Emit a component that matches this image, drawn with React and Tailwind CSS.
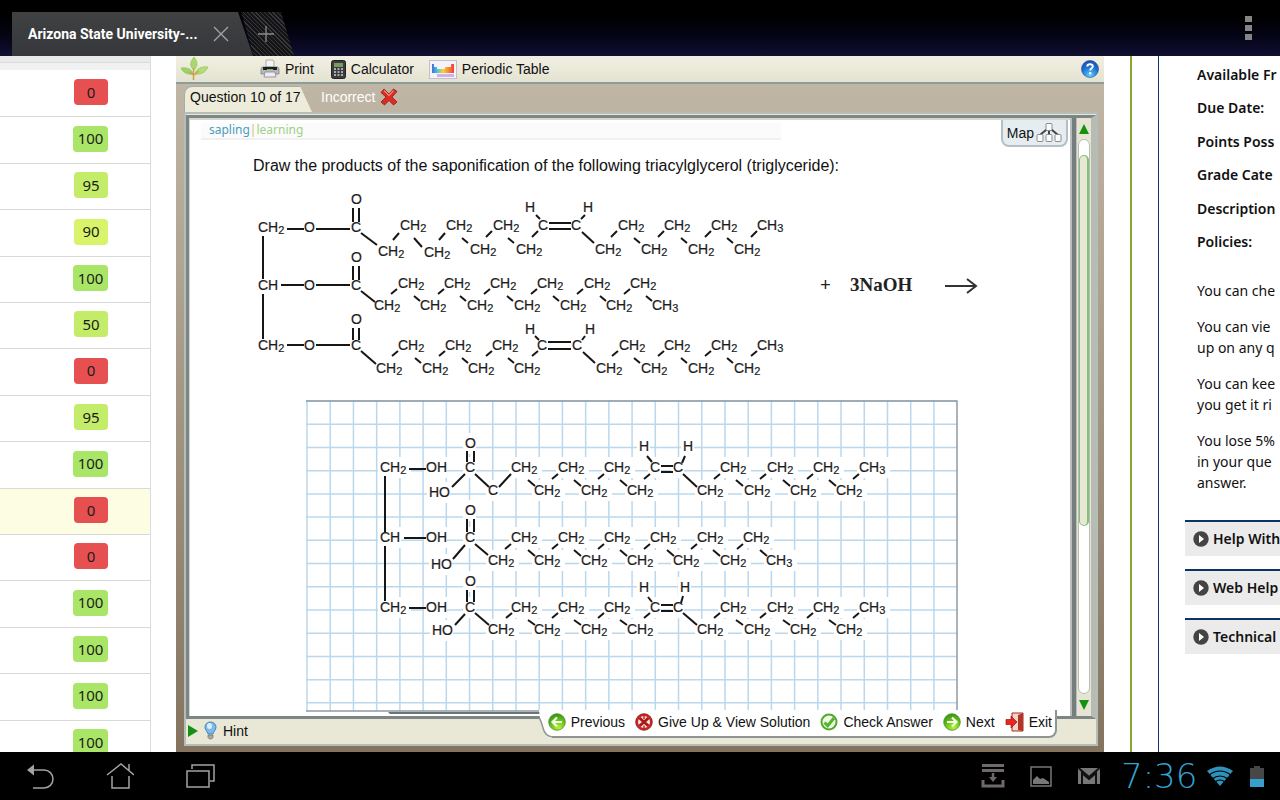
import React from 'react';

const SCORES = [0, 100, 95, 90, 100, 50, 0, 95, 100, 0, 0, 100, 100, 100, 100];

const ACTIVE_ROW = 9;

const scoreColor = (score) => {
  if (score === 0) return 'w-[34px] bg-[#e65050]';
  if (score === 50) return 'w-[34px] bg-[#c3ec69]';
  if (score === 90) return 'w-[34px] bg-[#d9f36b]';
  if (score === 95) return 'w-[34px] bg-[#c3ec69]';
  return 'w-[35px] bg-[#a9e567]';
};

const DETAILS = ['Available Fr', 'Due Date:', 'Points Poss', 'Grade Cate', 'Description', 'Policies:'];

const POLICIES = [
  ['You can che'],
  ['You can vie', 'up on any q'],
  ['You can kee', 'you get it ri'],
  ['You lose 5%', 'in your que', 'answer.'],
];

const HELP_LINKS = ['Help With', 'Web Help', 'Technical'];

// Molecule data: labels are [x, baseline, text], bonds are [x1, y1, x2, y2]
const up = (xs, y, dx = 6, dy = 6) => xs.map((x) => [x, y, x + dx, y - dy]);
const down = (xs, y, dx = 6, dy = 5) => xs.map((x) => [x, y, x + dx, y + dy]);
const row = (xs, y, last) => xs.map((x, i) => [x, y, last && i === xs.length - 1 ? 'CH3' : 'CH2']);

const REACTANT_LABELS = [
  [258, 232, 'CH2'], [304, 232, 'O'], [351, 232, 'C'], [351, 204, 'O'],
  ...row([400, 446, 493], 230), [538, 230, 'C'], [571, 230, 'C'],
  ...row([618, 664, 711, 757], 230, true),
  [378, 256, 'CH2'], [424, 257, 'CH2'],
  ...row([470, 516, 595, 641, 688, 734], 254),
  [525, 212, 'H'], [583, 212, 'H'],

  [258, 290, 'CH'], [304, 290, 'O'], [351, 290, 'C'], [351, 262, 'O'],
  ...row([398, 444, 490, 537, 584, 630], 288),
  ...row([374, 420, 467, 514, 560, 606, 652], 310, true),

  [258, 350, 'CH2'], [304, 350, 'O'], [351, 350, 'C'], [351, 324, 'O'],
  ...row([398, 445, 492], 350), [537, 350, 'C'], [572, 350, 'C'],
  ...row([619, 664, 711, 757], 350, true),
  ...row([376, 422, 468, 514, 596, 641, 688, 734], 373),
  [525, 334, 'H'], [585, 334, 'H'],
];

const REACTANT_BONDS = [
  [263, 236, 263, 279], [263, 294, 263, 339],
  [287, 229, 304, 229], [316, 229, 350, 229],
  [281, 285, 304, 285], [316, 285, 350, 285],
  [287, 345, 304, 345], [316, 345, 350, 345],
  [353, 208, 353, 222], [359, 208, 359, 222],
  [353, 266, 353, 280], [359, 266, 359, 280],
  [353, 328, 353, 340], [359, 328, 359, 340],
  [361, 233, 377, 245], [361, 291, 375, 302], [361, 351, 376, 364],
  [549, 223, 571, 223], [549, 229, 571, 229],
  [548, 342, 571, 342], [548, 349, 571, 349],
  [536, 215, 540, 219], [585, 215, 581, 219],
  [535, 336, 539, 340], [585, 336, 582, 340],
  [582, 232, 594, 243], [583, 352, 595, 363],
  [414, 238, 422, 247],
  ...up([393, 439], 240, 6, 7),
  ...up([486, 532, 611, 658, 705, 751], 237),
  ...down([462, 508, 634, 681, 727], 238),
  ...up([391, 438, 484, 531, 577, 624], 294, 6, 5),
  ...down([414, 460, 507, 553, 600, 646], 296),
  ...up([392, 439, 486, 532, 612, 658, 705, 751], 356, 6, 5),
  ...down([415, 462, 508, 634, 681, 727], 358),
];

const PRODUCT_LABELS = [
  [380, 472, 'CH2'], [426, 472, 'OH'], [465, 472, 'C'], [465, 448, 'O'], [429, 497, 'HO'], [488, 495, 'C'],
  ...row([511, 558, 604], 472), [650, 472, 'C'], [673, 472, 'C'],
  ...row([720, 767, 813, 859], 472, true),
  ...row([534, 581, 627, 697, 744, 790, 836], 495),
  [639, 451, 'H'], [683, 451, 'H'],

  [380, 542, 'CH'], [426, 542, 'OH'], [465, 542, 'C'], [465, 515, 'O'], [431, 569, 'HO'],
  ...row([511, 558, 604, 650, 697, 743], 542),
  ...row([488, 534, 581, 627, 673, 720, 766], 565, true),

  [380, 612, 'CH2'], [426, 612, 'OH'], [465, 612, 'C'], [465, 586, 'O'], [432, 635, 'HO'],
  ...row([511, 558, 604], 612), [650, 612, 'C'], [673, 612, 'C'],
  ...row([720, 767, 813, 859], 612, true),
  ...row([488, 534, 581, 627, 697, 744, 790, 836], 634),
  [639, 592, 'H'], [680, 592, 'H'],
];

const PRODUCT_BONDS = [
  [385, 476, 385, 532], [385, 546, 385, 601],
  [409, 469, 426, 469], [404, 538, 426, 538], [409, 608, 426, 608],
  [467, 451, 467, 462], [474, 451, 474, 462],
  [467, 519, 467, 532], [474, 519, 474, 532],
  [467, 590, 467, 602], [474, 590, 474, 602],
  [465, 474, 452, 487], [475, 474, 489, 487], [499, 487, 511, 474],
  [465, 545, 453, 559], [475, 544, 488, 555],
  [465, 614, 455, 625], [475, 613, 489, 625],
  [661, 466, 673, 466], [661, 472, 673, 472],
  [661, 605, 673, 605], [661, 611, 673, 611],
  [647, 456, 652, 462], [685, 456, 682, 463],
  [648, 597, 652, 602], [683, 596, 681, 603],
  [683, 474, 697, 487], [683, 613, 697, 625],
  ...down([528, 574, 620, 736, 783, 829], 480, 7, 6),
  ...up([552, 598, 644, 714, 760, 807, 853], 479, 6, 5),
  ...up([505, 552, 598, 644, 691, 737], 549, 6, 5),
  ...down([528, 574, 620, 667, 713, 760], 550, 7, 6),
  ...up([506, 552, 598, 644, 714, 760, 807, 853], 618, 6, 5),
  ...down([528, 574, 620, 736, 783, 829], 620, 7, 5),
];

const GRID_COLS = Array.from({ length: 28 }, (_, i) => 307 + i * 23.22);
const GRID_ROWS = Array.from({ length: 14 }, (_, i) => 401 + i * 23.22);

const Molecule = ({ labels, bonds, backed }) => (
  <g>
    {backed && labels.map(([x, y, text]) => (
      <rect
        key={`b-${x}-${y}`}
        x={x - 2}
        y={y - 15}
        width={text.length * 10 + 3}
        height="21"
        fill="#fff"
      />
    ))}
    {bonds.map(([x1, y1, x2, y2]) => (
      <line key={`${x1}-${y1}-${x2}-${y2}`} x1={x1} y1={y1} x2={x2} y2={y2} stroke="#161616" strokeWidth="2" />
    ))}
    {labels.map(([x, y, text]) => {
      const sub = /\d$/.test(text) ? text.slice(-1) : '';
      const main = sub ? text.slice(0, -1) : text;
      return (
        <text key={`${x}-${y}`} x={x} y={y} fontSize="14" fill="#1c1c1c" stroke="#1c1c1c" strokeWidth="0.2">
          {main}
          {sub && <tspan dy="2" fontSize="11">{sub}</tspan>}
        </text>
      );
    })}
  </g>
);

/* ---------- icons ---------- */

const SproutIcon = () => (
  <svg width="30" height="26" viewBox="0 0 30 26">
    <path d="M14 14C9 10 10 6 14 1c4 5 4 9 0 13z" fill="#a8d86e" stroke="#8cc152" strokeWidth="0.6" />
    <path d="M13 18C8 19 3 17 1 12c6-1 11 1 12 6z" fill="#9ad268" stroke="#8cc152" strokeWidth="0.6" />
    <path d="M15 18c1-5 6-8 13-7-2 5-7 8-13 7z" fill="#b2dd77" stroke="#8cc152" strokeWidth="0.6" />
    <path d="M13.500 12v12M13.500 19l-4-3M14 19l5-4" stroke="#c9a54b" strokeWidth="1.500" fill="none" />
  </svg>
);

const PrinterIcon = () => (
  <svg width="20" height="20" viewBox="0 0 20 20">
    <path d="M6 8V1h7l1 1v6z" fill="#f4f4f6" stroke="#999" strokeWidth="0.800" />
    <path d="M2 8h16l1 2v5H1v-5z" fill="#b9b9bd" stroke="#77777c" strokeWidth="0.700" />
    <path d="M3 8h14v3H3z" fill="#1f1f20" />
    <path d="M7 10h6v1H7z" fill="#6cbf55" />
    <path d="M5 13h10l1 5H4z" fill="#eceaf6" stroke="#88888e" strokeWidth="0.800" />
  </svg>
);

const CalculatorIcon = () => (
  <svg width="15" height="19" viewBox="0 0 15 19">
    <rect x="0.500" y="0.500" width="14" height="18" rx="2" fill="#3c3c3c" stroke="#222" />
    <rect x="3" y="3" width="9" height="4" fill="#7a9a63" />
    {[9, 12, 15].map((y) => (
      <path key={y} d={`M3 ${y}h2M6.500 ${y}h2M10 ${y}h2`} stroke="#cfcfcf" strokeWidth="1.600" />
    ))}
  </svg>
);

const PeriodicIcon = () => (
  <svg width="28" height="19" viewBox="0 0 28 19">
    <defs>
      <linearGradient id="spectrum">
        <stop offset="0" stopColor="#3f6fe0" />
        <stop offset="0.25" stopColor="#4fc8ce" />
        <stop offset="0.5" stopColor="#f5d331" />
        <stop offset="0.75" stopColor="#f78a35" />
        <stop offset="1" stopColor="#ef3f36" />
      </linearGradient>
    </defs>
    <rect x="0.500" y="0.500" width="27" height="18" fill="#f4f2fa" stroke="#c3c0c6" />
    <path d="M3 4h2v3h3v2h8V7h6V4h3v9H3z" fill="url(#spectrum)" />
    <rect x="8" y="14" width="17" height="3" fill="#d3b0ea" />
  </svg>
);

const HelpIcon = () => (
  <svg width="18" height="18" viewBox="0 0 18 18">
    <defs>
      <radialGradient id="helpBall" cx="0.5" cy="0.9" r="0.9">
        <stop offset="0" stopColor="#5fd0ff" />
        <stop offset="0.6" stopColor="#1c6fd0" />
        <stop offset="1" stopColor="#1c4fb0" />
      </radialGradient>
    </defs>
    <circle cx="9" cy="9" r="8.500" fill="url(#helpBall)" stroke="#1d479c" strokeWidth="0.600" />
    <path d="M6.200 6.500c.3-3.200 5.700-3 5.600 0 0 1.700-2.600 1.900-2.600 4" fill="none" stroke="#fff" strokeWidth="2" />
    <circle cx="9.200" cy="13.300" r="1.200" fill="#fff" />
  </svg>
);

const WrongIcon = () => (
  <svg width="18" height="18" viewBox="0 0 18 18">
    <path d="M4 1l5 5 4.500-5L17 3.500 12 9l5 5-3.500 3L9 12.500 4.500 17 1 14l5-5-5-4.500z" fill="#dd2c22" stroke="#8f1711" strokeWidth="0.800" />
    <path d="M4 2.500l5 5 4.500-4.800" stroke="#f58c7d" strokeWidth="1.200" fill="none" />
  </svg>
);

const MapIcon = () => (
  <svg width="26" height="20" viewBox="0 0 26 20">
    <path d="M4 12l6-5h6l6 5M13 6v6" stroke="#444" strokeWidth="2" fill="none" />
    <g fill="#fbfbfb" stroke="#8b8b8b">
      <rect x="10" y="0.500" width="6" height="7" rx="1" />
      <rect x="1" y="11.500" width="6" height="7" rx="1" />
      <rect x="10" y="11.500" width="6" height="7" rx="1" />
      <rect x="19" y="11.500" width="6" height="7" rx="1" />
    </g>
  </svg>
);

const GreenArrow = ({ left }) => (
  <svg width="18" height="18" viewBox="0 0 18 18">
    <defs>
      <radialGradient id="greenBall" cx="0.6" cy="0.85" r="0.9">
        <stop offset="0" stopColor="#b4f52f" />
        <stop offset="0.6" stopColor="#5cb81d" />
        <stop offset="1" stopColor="#338b16" />
      </radialGradient>
    </defs>
    <circle cx="9" cy="9" r="8.300" fill="url(#greenBall)" stroke="#4c8f24" strokeWidth="0.800" />
    <path
      d={left ? 'M14 9H5M9 4.500L4.500 9 9 13.500' : 'M4 9h9M9 4.500l4.500 4.500L9 13.500'}
      fill="none"
      stroke="#f3ffe6"
      strokeWidth="2.200"
    />
  </svg>
);

const GiveUpIcon = () => (
  <svg width="18" height="18" viewBox="0 0 18 18">
    <circle cx="9" cy="9" r="8.300" fill="#c92523" stroke="#8d1414" strokeWidth="0.800" />
    <circle cx="9" cy="9" r="6" fill="#f8e4e2" />
    <path d="M4.500 5l9 8M13.500 5l-9 8" stroke="#a81818" strokeWidth="3" />
    <path d="M9 3v3M9 12.500V15" stroke="#c92523" strokeWidth="1.500" />
  </svg>
);

const CheckIcon = () => (
  <svg width="18" height="18" viewBox="0 0 18 18">
    <circle cx="9" cy="9" r="7.500" fill="#eefae4" stroke="#55a82f" strokeWidth="2" />
    <path d="M4.500 9.500l3.200 3.300L14 5" fill="none" stroke="#55b52c" strokeWidth="3" />
  </svg>
);

const ExitIcon = () => (
  <svg width="19" height="20" viewBox="0 0 19 20">
    <path d="M7 1h11v18H7z" fill="#f2d7c9" stroke="#a82a1d" />
    <path d="M13 3l5-2v18l-5-1z" fill="#b3352a" />
    <path d="M1 7.500h5V4l6 6-6 6v-3.500H1z" fill="#e8261f" stroke="#9c1510" strokeWidth="0.700" />
  </svg>
);

const BulbIcon = () => (
  <svg width="13" height="19" viewBox="0 0 13 19">
    <path d="M6.500 1C3 1 1 3.500 1 6.200 1 9 3.500 10.500 4 13h5c.5-2.500 3-4 3-6.800C12 3.500 10 1 6.500 1z" fill="#79baea" stroke="#4d83b8" />
    <ellipse cx="5.500" cy="5" rx="2.500" ry="3" fill="#d8effc" />
    <path d="M4 14h5v2.500L7.500 18h-2L4 16.500z" fill="#a9a9a4" stroke="#71716c" strokeWidth="0.700" />
  </svg>
);

const HelpArrow = () => (
  <svg width="16" height="16" viewBox="0 0 16 16">
    <circle cx="8" cy="8" r="7.700" fill="#444" />
    <path d="M6 4l5 4-5 4z" fill="#fff" />
  </svg>
);

/* ---------- browser + system bars ---------- */

const BrowserBar = () => (
  <header className="flex h-14 shrink-0 items-end justify-between bg-linear-to-b from-black to-[#111031] pl-3 font-['Roboto',sans-serif]">
    <div className="flex">
      <div className="flex h-11 w-[241px] items-center bg-linear-to-b from-[#3f4143] to-[#36373a] pl-4 [clip-path:polygon(0_0,226px_0,100%_100%,0_100%)]">
        <span className="w-[172px] text-sm font-bold whitespace-nowrap text-white">Arizona State University-...</span>
        <button aria-label="Close tab" className="ml-3">
          <svg width="18" height="18" viewBox="0 0 18 18">
            <path d="M2 2l14 14M16 2L2 16" stroke="#a5a5a5" strokeWidth="1.300" />
          </svg>
        </button>
      </div>
      <button
        aria-label="New tab"
        className="-ml-3 flex h-11 w-[53px] items-center justify-center bg-[repeating-linear-gradient(45deg,#141416_0_2px,#38383a_2px_3px)] [clip-path:polygon(0_0,40px_0,100%_100%,13px_100%)]"
      >
        <svg width="18" height="18" viewBox="0 0 18 18" className="mr-1">
          <path d="M9 1v16M1 9h16" stroke="#8c8c8c" strokeWidth="1.300" />
        </svg>
      </button>
    </div>
    <button aria-label="Menu" className="mr-7 mb-4 flex flex-col gap-[3px]">
      <span className="h-[6px] w-[7px] bg-[#858585]" />
      <span className="h-[6px] w-[7px] bg-[#858585]" />
      <span className="h-[6px] w-[7px] bg-[#858585]" />
    </button>
  </header>
);

const SystemBar = () => (
  <footer className="flex h-12 shrink-0 items-center justify-between bg-black px-6">
    <div className="flex items-center gap-[50px]">
      <button aria-label="Back">
        <svg width="30" height="28" viewBox="0 0 30 28" fill="none" stroke="#a3a3a3" strokeWidth="1.500">
          <path d="M9 8h11a8.500 8.500 0 0 1 0 18H9" />
          <path d="M3 8l7-5.500v11z" fill="#a3a3a3" stroke="none" />
        </svg>
      </button>
      <button aria-label="Home">
        <svg width="30" height="28" viewBox="0 0 30 28" fill="none" stroke="#a3a3a3" strokeWidth="1.500">
          <path d="M3 13L17 2l13 11M8 14v12h17V14M25 8V2" />
        </svg>
      </button>
      <button aria-label="Recent apps">
        <svg width="32" height="26" viewBox="0 0 32 26" fill="none" stroke="#a3a3a3" strokeWidth="1.500">
          <path d="M3 8h22v16H3zM8 6V2h22v16h-4" />
        </svg>
      </button>
    </div>
    <div className="-mr-2 flex items-center">
      <svg width="24" height="26" viewBox="0 0 24 26" className="mr-[25px]" fill="none" stroke="#6f696c" strokeWidth="3">
        <path d="M1 2.500h22M1 7.500h22M2 17v6h20v-6" />
        <path d="M12 10v5" strokeWidth="2.500" />
        <path d="M8 14h8l-4 5z" fill="#6f696c" stroke="none" />
      </svg>
      <svg width="22" height="21" viewBox="0 0 22 21" className="mr-[25px]">
        <path d="M1 1h20v19H1z" fill="none" stroke="#777" strokeWidth="1.500" />
        <path d="M3 18v-4l4-4 3 3 3-1 6 4v2z" fill="#777" />
      </svg>
      <svg width="24" height="18" viewBox="0 0 24 18" className="mr-5">
        <path d="M1 1h22v16H1z" fill="#777" />
        <path d="M5 17V6l7 6 7-6v11M1.500 1L12 10 22.500 1" fill="none" stroke="#111" strokeWidth="2" />
      </svg>
      <span className="w-[86px] font-['DejaVu_Sans',sans-serif] text-[34px] leading-8 font-extralight text-[#35a3d1]">7:36</span>
      <svg width="26" height="20" viewBox="0 0 26 20" className="mr-[17px]">
        <path d="M0 5Q13-4 26 5L13 20z" fill="#2f92bb" />
        <path d="M2 9q11-8 22 0M5 13q8-6 16 0M8 16q5-4 10 0" fill="none" stroke="#000" strokeWidth="1.200" />
      </svg>
      <svg width="14" height="21" viewBox="0 0 14 21">
        <path d="M0 2h4V0h6v2h4v11H0z" fill="#474747" />
        <path d="M0 13h14v8H0z" fill="#35a0cb" />
      </svg>
    </div>
  </footer>
);

/* ---------- page columns ---------- */

const ScoreColumn = () => (
  <aside className="w-[151px] shrink-0 border-r border-[#dcdcdc]">
    <div className="h-[14px] bg-[#f1f1f1]">
      <div className="h-[7px] border-b border-[#dadada] bg-[#e9e9e9]" />
    </div>
    <table className="w-full border-collapse">
      <tbody>
        {SCORES.map((score, i) => (
          <tr
            key={i}
            className={`h-[46px] border-b border-[#d9d9d9] nth-[5n+2]:h-[47px] nth-[5n+4]:h-[47px] ${i === ACTIVE_ROW ? 'bg-[#fdfde4]' : ''}`}
          >
            <td className="pr-[42px] pb-[2px]">
              <span
                className={`ml-auto flex h-[26px] items-center justify-center rounded font-['Noto_Sans',sans-serif] text-[15px] text-[#1c1c1c] ${scoreColor(score)}`}
              >
                {score}
              </span>
            </td>
          </tr>
        ))}
      </tbody>
    </table>
  </aside>
);

const Toolbar = () => (
  <div className="flex h-7 shrink-0 items-center border-b-2 border-[#8f9d9a] bg-linear-to-b from-[#f2f0e3] to-[#e4e2d0] pr-[5px] pl-1 text-sm">
    <SproutIcon />
    <button className="ml-[50px] flex items-center gap-[5px]">
      <PrinterIcon />
      Print
    </button>
    <button className="ml-[17px] flex items-center gap-[5px]">
      <CalculatorIcon />
      Calculator
    </button>
    <button className="ml-[15px] flex items-center gap-[5px]">
      <PeriodicIcon />
      Periodic Table
    </button>
    <button aria-label="Help" className="ml-auto">
      <HelpIcon />
    </button>
  </div>
);

const QuestionTabs = () => (
  <div className="flex h-7 shrink-0 items-end pl-2 text-sm">
    <h1 className="flex h-[26px] w-[128px] items-center rounded-tl-lg border-t border-l border-[#a5aeaa] bg-[#edebd9] pb-[6px] pl-[5px] whitespace-nowrap [clip-path:polygon(0_0,116px_0,100%_100%,0_100%)]">
      Question 10 of 17
    </h1>
    <span className="mb-[5px] ml-[9px] flex items-center gap-[5px] text-white">
      Incorrect <WrongIcon />
    </span>
  </div>
);

const Reactants = () => (
  <svg width="880" height="210" viewBox="190 182 880 210" className="block shrink-0">
    <Molecule labels={REACTANT_LABELS} bonds={REACTANT_BONDS} />
    <g className="font-['Liberation_Serif',serif]" fontSize="19" fontWeight="700" fill="#222">
      <text x="820" y="291">+</text>
      <text x="850" y="291">3NaOH</text>
    </g>
    <path d="M945 286h30M967 279l9 7-9 7" fill="none" stroke="#333" strokeWidth="2" />
  </svg>
);

const AnswerCanvas = () => (
  <svg width="652" height="315" viewBox="306 400 652 315" className="mt-2 ml-[116px] block shrink-0">
    <g stroke="#b9d8ee" strokeWidth="1.500">
      {GRID_COLS.map((x) => (
        <line key={x} x1={x} y1="400" x2={x} y2="711" />
      ))}
      {GRID_ROWS.map((y) => (
        <line key={y} x1="306" y1={y} x2="957" y2={y} />
      ))}
    </g>
    <path d="M306 401h651v310H306" fill="none" stroke="#8f9ba3" strokeWidth="1.500" />
    <path d="M388 712h170v2H390z" fill="#6b7377" />
    <Molecule labels={PRODUCT_LABELS} bonds={PRODUCT_BONDS} backed />
  </svg>
);

const ScrollBar = () => (
  <div className="flex w-[14px] shrink-0 flex-col items-center bg-[#e6e5d3]">
    <button aria-label="Scroll up" className="flex h-[21px] items-center">
      <svg width="10" height="10" viewBox="0 0 10 10"><path d="M5 0l5 10H0z" fill="#16900f" /></svg>
    </button>
    <div className="w-3 flex-1 rounded-full border border-[#b9bdb4] bg-white pt-[15px]">
      <div className="h-[69%] rounded-md border-y border-r-2 border-l border-[#7fc276] bg-[#e9e8d5]" />
    </div>
    <button aria-label="Scroll down" className="flex h-[22px] items-center">
      <svg width="10" height="10" viewBox="0 0 10 10"><path d="M5 10L0 0h10z" fill="#16900f" /></svg>
    </button>
  </div>
);

const ActionBar = () => (
  <div className="absolute right-[39px] bottom-[6px] flex h-[28px] text-sm">
    <svg width="13" height="28" viewBox="0 0 13 28">
      <path d="M0 0h13v28h-2Q7 27 5 20L1 8z" fill="#fff" />
      <path d="M0 8q2 2 4 10t9 9" fill="none" stroke="#8c9693" strokeWidth="1.500" />
    </svg>
    <div className="flex items-center rounded-br-lg border-r-2 border-b-2 border-[#8c9693] bg-white pt-[2px] pr-[3px] pb-1">
      <button className="-ml-1 flex items-center gap-[5px]">
        <GreenArrow left /> Previous
      </button>
      <button className="ml-[10px] flex items-center gap-[5px]">
        <GiveUpIcon /> Give Up &amp; View Solution
      </button>
      <button className="ml-[10px] flex items-center gap-[5px]">
        <CheckIcon /> Check Answer
      </button>
      <button className="ml-[10px] flex items-center gap-[5px]">
        <GreenArrow /> Next
      </button>
      <button className="ml-[10px] flex items-center gap-[5px]">
        <ExitIcon /> Exit
      </button>
    </div>
  </div>
);

const Applet = () => (
  <main className="ml-[25px] flex min-w-0 flex-1 flex-col bg-linear-to-b from-[#c3b9a9] to-[#84745f] font-['Liberation_Sans',Arial,sans-serif] whitespace-nowrap text-[#111]">
    <Toolbar />
    <QuestionTabs />
    <div className="relative mr-[6px] mb-[6px] ml-2 flex min-h-0 flex-1 flex-col border-2 border-[#b5bdb8] bg-[#e9e8d6] pt-[1px]">
      <div className="flex min-h-0 flex-1 border-[3px] border-r-[5px] border-[#7d8585] border-r-[#b6bbb3]">
        <section className="flex min-w-0 flex-1 flex-col overflow-hidden border-t-2 border-l border-[#d4d6d6] bg-white">
          <div className="flex h-[30px] shrink-0 items-start justify-between pr-[2px] pl-[11px]">
            <div className="mt-[3px] flex h-[17px] w-[580px] items-center border-b-2 border-[#f0f0f0] bg-[#fbfbfb] pb-[2px] pl-2 font-['Noto_Sans',sans-serif] text-xs">
              <span className="text-[#4a9cc0]">sapling</span>
              <span className="text-[#d8bb5d]">|</span>
              <span className="text-[#9fcf86]">learning</span>
            </div>
            <button className="flex h-[27px] items-center gap-[2px] rounded-b-lg border-x-2 border-b-2 border-[#b3c0c6] bg-[#e6edf0] px-1 text-sm">
              Map <MapIcon />
            </button>
          </div>
          <h2 className="h-8 shrink-0 pl-[63px] text-base leading-8">
            Draw the products of the saponification of the following triacylglycerol (triglyceride):
          </h2>
          <Reactants />
          <AnswerCanvas />
        </section>
        <div className="w-[7px] shrink-0 border-r border-l-2 border-[#b9bebc] bg-[#757d7d]" />
        <ScrollBar />
      </div>
      <div className="flex h-[25px] shrink-0 items-center pb-[2px] text-sm">
        <button className="flex items-center">
          <svg width="11" height="12" viewBox="0 0 11 12" className="ml-[2px]"><path d="M0 0l10 6-10 6z" fill="#16900f" /></svg>
          <span className="mr-[6px] ml-[5px]"><BulbIcon /></span>
          Hint
        </button>
      </div>
      <ActionBar />
    </div>
  </main>
);

const DetailsColumn = () => (
  <div className="flex w-[176px] shrink-0 pl-[26px] font-['Noto_Sans',sans-serif] text-[15px] whitespace-nowrap text-[#111]">
    <div className="w-7 shrink-0 border-l-2 border-[#86a82e]" />
    <aside className="min-w-0 flex-1 border-l border-[#0b3363] pt-[2px] pl-[26px]">
      <dl className="pl-3 text-sm font-semibold">
        {DETAILS.map((label) => (
          <dt key={label} className="h-[33px] leading-[34px] even:h-[34px]">{label}</dt>
        ))}
      </dl>
      <div className="mt-[21px] pl-3 text-sm leading-[21px]">
        {POLICIES.map((lines) => (
          <p key={lines[0]} className="mb-[15px]">
            {lines.map((line) => (
              <span key={line} className="block">{line}</span>
            ))}
          </p>
        ))}
      </div>
      <div className="mt-[27px] flex flex-col gap-[13px]">
        {HELP_LINKS.map((label) => (
          <a key={label} href="#" className="flex h-9 items-center gap-1 border-t-2 border-[#0b3363] bg-[#ebebeb] pl-2 text-sm font-semibold">
            <span className="shrink-0"><HelpArrow /></span>
            {label}
          </a>
        ))}
      </div>
    </aside>
  </div>
);

const App = () => (
  <div className="flex h-screen flex-col overflow-hidden bg-white">
    <BrowserBar />
    <div className="flex min-h-0 flex-1 overflow-hidden">
      <ScoreColumn />
      <Applet />
      <DetailsColumn />
    </div>
    <SystemBar />
  </div>
);

export default App;
